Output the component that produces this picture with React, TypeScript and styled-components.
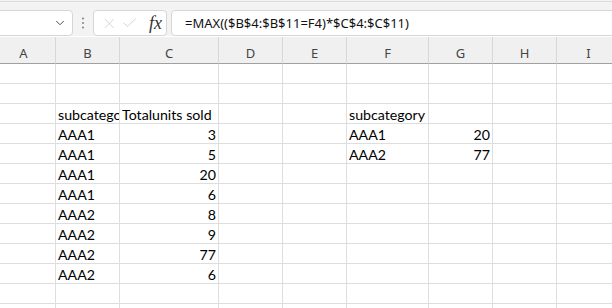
import React from "react";
import styled, { createGlobalStyle } from "styled-components";
import { ChevronDown, X, Check } from "lucide-react";

const GlobalStyle = createGlobalStyle`
  html, body {
    margin: 0;
    padding: 0;
    background: #ffffff;
    overflow: hidden;
  }
`;

const Window = styled.div`
  width: 612px;
  height: 308px;
  overflow: hidden;
  background: #ffffff;
`;

const TopStrip = styled.div`
  height: 9px;
  background: #f3f3f3;
  border-top: 1px solid #f3f3f3;
  box-shadow: inset 0 1px 0 #dcdcdc;
`;

const FormulaBar = styled.div`
  display: flex;
  align-items: stretch;
  height: 26px;
  background: #f3f3f3;
`;

const Box = styled.div`
  box-sizing: border-box;
  background: #ffffff;
  border: 1px solid #d6d6d6;
  border-radius: 4px;
  display: flex;
  align-items: center;
`;

const NameBox = styled(Box)`
  width: 77px;
  margin-left: -4px;
  justify-content: flex-end;
  padding-right: 5px;
  color: #444;
`;

const Grip = styled.div`
  width: 20px;
  display: flex;
  align-items: center;
  justify-content: center;
`;

const FxBox = styled(Box)`
  width: 74px;
  padding: 0 4px 0 7px;
  gap: 3px;
  color: #c4c4c4;
`;

const FxLabel = styled.span`
  font-family: "Liberation Serif", "DejaVu Serif", serif;
  font-style: italic;
  font-size: 18px;
  color: #333;
  margin-left: 8px;
  line-height: 1;
`;

const FormulaInput = styled(Box)`
  flex: 1;
  margin-left: 4px;
  margin-right: -10px;
  padding-left: 13px;
  font-family: "Noto Sans", "Open Sans", sans-serif;
  font-size: 13px;
  color: #111;
  border-radius: 4px 0 0 4px;
`;

const Sheet = styled.div`
  margin-top: 1px;
  margin-left: -8px;
  display: grid;
  grid-template-columns: 64px 64px 99px 64px 64px 82px 64px 64px 64px;
`;

const HeaderCell = styled.div`
  box-sizing: border-box;
  height: 27px;
  background: #f0f0f0;
  border-bottom: 1px solid #a0a0a0;
  border-right: 1px solid #d8d8d8;
  display: flex;
  align-items: center;
  justify-content: center;
  padding-top: 6px;
  font-family: "Noto Sans", "Open Sans", sans-serif;
  font-size: 13px;
  color: #444;
`;

const Cell = styled.div<{ $align?: "left" | "right" }>`
  box-sizing: border-box;
  height: 20px;
  border-right: 1px solid #dedede;
  border-bottom: 1px solid #dedede;
  padding: 0 2px;
  font-family: Lato, "Open Sans", sans-serif;
  font-size: 14.2px;
  line-height: 21px;
  color: #000;
  white-space: nowrap;
  overflow: ${(p) => (p.$align === "left" ? "hidden" : "visible")};
  text-align: ${(p) => p.$align ?? "left"};
`;

const columns = ["A", "B", "C", "D", "E", "F", "G", "H", "I"];

type Row = Record<string, string | number>;

const rows: Row[] = [
  {},
  {},
  { B: "subcategory", C: "Totalunits sold", F: "subcategory" },
  { B: "AAA1", C: 3, F: "AAA1", G: 20 },
  { B: "AAA1", C: 5, F: "AAA2", G: 77 },
  { B: "AAA1", C: 20 },
  { B: "AAA1", C: 6 },
  { B: "AAA2", C: 8 },
  { B: "AAA2", C: 9 },
  { B: "AAA2", C: 77 },
  { B: "AAA2", C: 6 },
  {},
  {},
  {},
];

function GripDots() {
  return (
    <svg width="4" height="12" viewBox="0 0 4 12">
      <circle cx="2" cy="1.5" r="1.1" fill="#8a8a8a" />
      <circle cx="2" cy="6" r="1.1" fill="#8a8a8a" />
      <circle cx="2" cy="10.5" r="1.1" fill="#8a8a8a" />
    </svg>
  );
}

export default function App() {
  return (
    <Window>
      <GlobalStyle />
      <TopStrip />
      <FormulaBar>
        <NameBox>
          <ChevronDown size={14} strokeWidth={1.6} />
        </NameBox>
        <Grip>
          <GripDots />
        </Grip>
        <FxBox>
          <X size={19} strokeWidth={1} />
          <Check size={20} strokeWidth={1} />
          <FxLabel>fx</FxLabel>
        </FxBox>
        <FormulaInput>=MAX(($B$4:$B$11=F4)*$C$4:$C$11)</FormulaInput>
      </FormulaBar>
      <Sheet>
        {columns.map((c) => (
          <HeaderCell key={c}>{c}</HeaderCell>
        ))}
        {rows.map((row, r) =>
          columns.map((c) => {
            const v = row[c];
            const numeric = typeof v === "number";
            const clip = c === "B" && row.C !== undefined;
            return (
              <Cell
                key={`${c}${r}`}
                $align={numeric ? "right" : clip ? "left" : undefined}
              >
                {v ?? ""}
              </Cell>
            );
          })
        )}
      </Sheet>
    </Window>
  );
}
